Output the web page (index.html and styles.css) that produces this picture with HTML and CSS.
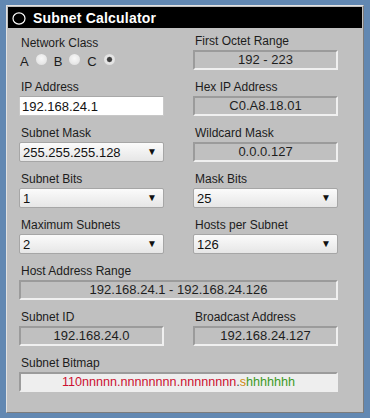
FILE: index.html
```html
<!DOCTYPE html>
<html lang="en">
<head>
    <meta charset="UTF-8">
    <meta name="viewport" content="width=device-width, initial-scale=1.0">
    <title>Subnet Calculator</title>
    <link rel="stylesheet" href="styles.css">
</head>
<body>
    <div class="window">
        <div class="titlebar">
            <svg class="title-icon" width="14" height="13" viewBox="0 0 14 13">
                <ellipse cx="7" cy="6.5" rx="6" ry="5.6" fill="none" stroke="#fff" stroke-width="1.2"/>
            </svg>
            <span class="title">Subnet Calculator</span>
        </div>

        <form class="calc">
            <div class="cell cell-class">
                <div class="label">Network Class</div>
                <div class="radios">
                    <span>A</span><input type="radio" name="cls" value="A">
                    <span>B</span><input type="radio" name="cls" value="B">
                    <span>C</span><input type="radio" name="cls" value="C" checked>
                </div>
            </div>
            <div class="cell">
                <div class="label">First Octet Range</div>
                <div class="out">192 - 223</div>
            </div>

            <div class="cell">
                <div class="label">IP Address</div>
                <input class="ip" type="text" value="192.168.24.1">
            </div>
            <div class="cell">
                <div class="label">Hex IP Address</div>
                <div class="out">C0.A8.18.01</div>
            </div>

            <div class="cell">
                <div class="label">Subnet Mask</div>
                <div class="select">
                    <select><option>255.255.255.128</option></select>
                </div>
            </div>
            <div class="cell">
                <div class="label">Wildcard Mask</div>
                <div class="out">0.0.0.127</div>
            </div>

            <div class="cell">
                <div class="label">Subnet Bits</div>
                <div class="select">
                    <select><option>1</option></select>
                </div>
            </div>
            <div class="cell">
                <div class="label">Mask Bits</div>
                <div class="select">
                    <select><option>25</option></select>
                </div>
            </div>

            <div class="cell">
                <div class="label">Maximum Subnets</div>
                <div class="select">
                    <select><option>2</option></select>
                </div>
            </div>
            <div class="cell">
                <div class="label">Hosts per Subnet</div>
                <div class="select">
                    <select><option>126</option></select>
                </div>
            </div>

            <div class="cell wide">
                <div class="label">Host Address Range</div>
                <div class="out">192.168.24.1 - 192.168.24.126</div>
            </div>

            <div class="cell">
                <div class="label">Subnet ID</div>
                <div class="out">192.168.24.0</div>
            </div>
            <div class="cell">
                <div class="label">Broadcast Address</div>
                <div class="out">192.168.24.127</div>
            </div>

            <div class="cell wide">
                <div class="label">Subnet Bitmap</div>
                <div class="out bitmap"><span class="net">110nnnnn.nnnnnnnn.nnnnnnnn</span><span class="dot">.</span><span class="sub">s</span><span class="host">hhhhhhh</span></div>
            </div>
        </form>
    </div>
</body>
</html>
```

FILE: styles.css
```css
body {
    margin: 0;
    padding: 5px 6px;
    background-color: #6288b2;
    font-family: "Liberation Sans", Arial, sans-serif;
}

.window {
    width: 354px;
    height: 404px;
    padding: 1px;
    background-color: #c0c0c0;
    border-top: 1px solid #e2e2e2;
    border-left: 1px solid #e2e2e2;
    border-right: 1px solid #7c7c7c;
    border-bottom: 1px solid #7c7c7c;
    display: flex;
    flex-direction: column;
}

.titlebar {
    height: 21px;
    background-color: #000;
    display: flex;
    align-items: center;
    padding-left: 4px;
    gap: 7px;
}

.title-icon {
    display: block;
    margin-top: 1px;
}

.title {
    color: #fff;
    font-weight: bold;
    font-size: 14px;
    letter-spacing: 0.2px;
}

.calc {
    margin: 0;
    padding: 6px 0 0 11px;
    display: grid;
    grid-template-columns: 145px 145px;
    grid-auto-rows: 36px;
    column-gap: 29px;
    row-gap: 10px;
}

.cell {
    display: flex;
    flex-direction: column;
}

.cell.wide {
    grid-column: 1 / 3;
}

.label {
    font-size: 12px;
    line-height: 14px;
    height: 14px;
    margin-bottom: 2px;
    padding-left: 2px;
    color: #1c1c1c;
}

.cell-class {
    padding-top: 2px;
}

.radios {
    display: flex;
    align-items: center;
    gap: 7px;
    height: 20px;
    padding-left: 1px;
    font-size: 13px;
    color: #1c1c1c;
}

.radios input {
    appearance: none;
    -webkit-appearance: none;
    margin: 0 0 4px 0;
    width: 11px;
    height: 11px;
    border-radius: 50%;
    background: radial-gradient(circle at 50% 40%, #f8f8f8 0%, #e8e8e8 60%, #d6d6d6 100%);
}

.radios input:checked {
    background: radial-gradient(circle, #3c3c3c 0, #3c3c3c 2px, #8a8a8a 2.6px, #e8e8e8 3.2px, #d6d6d6 100%);
}

.out {
    box-sizing: border-box;
    height: 20px;
    border-top: 2px solid #9b9b9b;
    border-left: 2px solid #9b9b9b;
    border-right: 2px solid #f0f0f0;
    border-bottom: 2px solid #f0f0f0;
    font-size: 13px;
    line-height: 16px;
    text-align: center;
    color: #1e1e1e;
}

.out.bitmap {
    background-color: #eeeeee;
    border-right-color: #eeeeee;
    border-bottom-color: #eeeeee;
    font-size: 12.6px;
}

.bitmap .net {
    color: #cc1030;
}

.bitmap .dot {
    color: #444;
}

.bitmap .sub {
    color: #d08a12;
}

.bitmap .host {
    color: #3c9a22;
}

.ip {
    box-sizing: border-box;
    width: 145px;
    height: 21px;
    margin: 0;
    padding: 0 2px;
    border: 1px solid #c8c8c8;
    border-top-color: #a8a8a8;
    background: #fff;
    font-family: "Liberation Sans", Arial, sans-serif;
    font-size: 13px;
    color: #111;
    outline: none;
}

.select {
    position: relative;
    height: 20px;
}

.select select {
    appearance: none;
    -webkit-appearance: none;
    box-sizing: border-box;
    width: 145px;
    height: 20px;
    margin: 0;
    padding: 0 0 0 3px;
    border: 1px solid #a6a6a6;
    border-radius: 2px;
    background: linear-gradient(#fbfbfb, #e6e6e6);
    font-family: "Liberation Sans", Arial, sans-serif;
    font-size: 13px;
    color: #111;
    outline: none;
}

.select::after {
    content: "\25BC";
    position: absolute;
    right: 7px;
    top: 5px;
    font-size: 10px;
    line-height: 10px;
    color: #111;
    pointer-events: none;
}
```
